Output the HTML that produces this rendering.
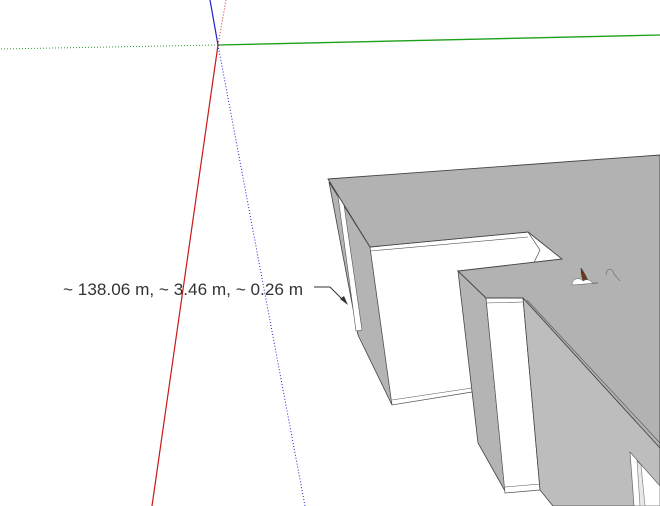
<!DOCTYPE html>
<html><head><meta charset="utf-8"><style>
html,body{margin:0;padding:0;background:#fff;width:660px;height:506px;overflow:hidden}
svg{display:block}
</style></head><body>
<svg width="660" height="506" viewBox="0 0 660 506" xmlns="http://www.w3.org/2000/svg">
<line x1="218" y1="45" x2="0" y2="49" stroke="#2a9a2a" stroke-width="1" stroke-dasharray="1,2"/>
<line x1="218" y1="45" x2="660" y2="35" stroke="#1aa01a" stroke-width="1.3"/>
<line x1="218" y1="45" x2="210" y2="0" stroke="#2020d0" stroke-width="1.2"/>
<line x1="218" y1="45" x2="226" y2="0" stroke="#d02020" stroke-width="1" stroke-dasharray="1,2"/>
<line x1="218" y1="45" x2="152" y2="506" stroke="#c81818" stroke-width="1.2"/>
<line x1="218" y1="45" x2="305" y2="506" stroke="#2020d0" stroke-width="1" stroke-dasharray="1,2"/>
<polygon points="329,182 370,247 392,405 358,335" fill="#b4b4b4" stroke="#444" stroke-width="0.8"/>
<polygon points="338,196 343,198 362,330 356,331" fill="#fff" stroke="#555" stroke-width="0.6"/>
<polygon points="370,247 528,232 540,250 472,392 392,405" fill="#fff" stroke="#555" stroke-width="0.7"/>
<line x1="370" y1="251" x2="528" y2="237" stroke="#555" stroke-width="0.6"/>
<line x1="392" y1="400" x2="472" y2="388" stroke="#555" stroke-width="0.6"/>
<polygon points="458,271 486,298 505,491 478,443" fill="#b4b4b4" stroke="#444" stroke-width="0.8"/>
<polygon points="486,298 523,298 540,490 505,493" fill="#fff" stroke="#555" stroke-width="0.7"/>
<line x1="486" y1="303" x2="523" y2="302" stroke="#555" stroke-width="0.6"/>
<line x1="505" y1="487" x2="540" y2="484" stroke="#555" stroke-width="0.6"/>
<polygon points="523,298 660,445 660,506 553,506 540,490" fill="#bdbdbd" stroke="#444" stroke-width="0.8"/>
<polygon points="630,452 660,486 660,506 634,506" fill="#fff" stroke="#666" stroke-width="0.7"/>
<polygon points="637,461 641,465 645,506 640,506" fill="#e8e8e8" stroke="#777" stroke-width="0.6"/>
<polygon points="328,179 660,155 660,448 523,298 486,298 458,271 562,259 528,232 370,247" fill="#b2b2b2" stroke="#444" stroke-width="0.9"/>
<line x1="527" y1="300" x2="660" y2="443" stroke="#555" stroke-width="0.6"/>
<path d="M581,268 C584,272 587,278 589,283 L585,284 C582,280 581,274 581,268 Z" fill="#6a3a1a" stroke="#333" stroke-width="0.5"/>
<path d="M572,285 C572,278 580,277 583,281 C587,278 592,281 592,283 L598,283 Z" fill="#fff" stroke="#555" stroke-width="0.5"/>
<path d="M606,275 C606,268 612,267 614,274 L620,281" fill="none" stroke="#777" stroke-width="0.8"/>
<text x="63" y="295" font-family="Liberation Sans, sans-serif" font-size="16.5" fill="#333" textLength="240" lengthAdjust="spacingAndGlyphs">~ 138.06 m, ~ 3.46 m, ~ 0.26 m</text>
<polyline points="314,287 330,287 345,302" fill="none" stroke="#333" stroke-width="1"/>
<polygon points="348,305 340,299 344,296" fill="#333"/>
</svg>
</body></html>
